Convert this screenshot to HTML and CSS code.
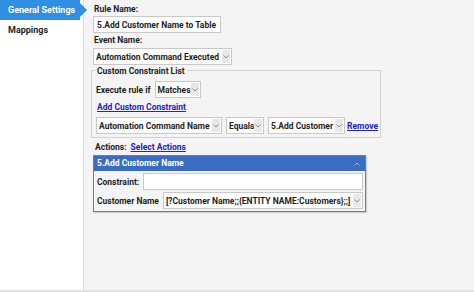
FILE: index.html
```html
<!DOCTYPE html>
<html lang="en">
<head>
<meta charset="UTF-8">
<title>Rule Editor</title>
<link rel="stylesheet" href="styles.css">
</head>
<body>
<div class="page">
  <div class="sidebar">
    <div class="tab active">General Settings</div>
    <div class="tab">Mappings</div>
  </div>

  <div class="main">
    <div class="label">Rule Name:</div>
    <div class="input rule-name">5.Add Customer Name to Table</div>

    <div class="label">Event Name:</div>
    <div class="select event-name"><span class="val">Automation Command Executed</span><span class="arrow"><svg width="6" height="4" viewBox="0 0 6 4"><path d="M0.5 0.5 L3 3 L5.5 0.5" fill="none" stroke="#8a8a8a" stroke-width="1"/></svg></span></div>

    <div class="fieldset">
      <div class="legend">Custom Constraint List</div>
      <div class="line">
        <span class="label-inline">Execute rule if</span>
        <div class="select w-match"><span class="val">Matches</span><span class="arrow"><svg width="6" height="4" viewBox="0 0 6 4"><path d="M0.5 0.5 L3 3 L5.5 0.5" fill="none" stroke="#8a8a8a" stroke-width="1"/></svg></span></div>
      </div>
      <a class="link add-link" href="#">Add Custom Constraint</a>
      <div class="line row-gap">
        <div class="select w-field"><span class="val">Automation Command Name</span><span class="arrow"><svg width="6" height="4" viewBox="0 0 6 4"><path d="M0.5 0.5 L3 3 L5.5 0.5" fill="none" stroke="#8a8a8a" stroke-width="1"/></svg></span></div>
        <div class="select w-op"><span class="val">Equals</span><span class="arrow"><svg width="6" height="4" viewBox="0 0 6 4"><path d="M0.5 0.5 L3 3 L5.5 0.5" fill="none" stroke="#8a8a8a" stroke-width="1"/></svg></span></div>
        <div class="select w-value"><span class="val">5.Add Customer</span><span class="arrow"><svg width="6" height="4" viewBox="0 0 6 4"><path d="M0.5 0.5 L3 3 L5.5 0.5" fill="none" stroke="#8a8a8a" stroke-width="1"/></svg></span></div>
        <a class="link remove" href="#">Remove</a>
      </div>
    </div>

    <div class="actions">
      <span>Actions:</span>
      <a class="link" href="#">Select Actions</a>
    </div>

    <div class="panel">
      <div class="panel-head">
        <span>5.Add Customer Name</span>
        <svg class="caret" width="6" height="4" viewBox="0 0 6 4"><path d="M0.5 3.5 L3 1 L5.5 3.5" fill="none" stroke="#9fb4dc" stroke-width="1"/></svg>
      </div>
      <div class="panel-body">
        <div class="line">
          <span class="label-inline">Constraint:</span>
          <div class="input grow"></div>
        </div>
        <div class="line row-gap-sm">
          <span class="label-inline">Customer Name</span>
          <div class="select grow"><span class="val">[?Customer Name;;{ENTITY NAME:Customers};;]</span><span class="arrow"><svg width="6" height="4" viewBox="0 0 6 4"><path d="M0.5 0.5 L3 3 L5.5 0.5" fill="none" stroke="#8a8a8a" stroke-width="1"/></svg></span></div>
        </div>
      </div>
    </div>
  </div>
</div>
</body>
</html>
```

FILE: styles.css
```css
body {
  margin: 0;
  font-family: Roboto, 'Noto Sans', sans-serif;
  font-size: 8.5px;
  font-weight: bold;
  color: #1e1e1e;
  background: #ffffff;
}

.page {
  display: flex;
  width: 474px;
  height: 290px;
  border-bottom: 2px solid #e2e2e2;
}

.sidebar {
  width: 83px;
  background: #ffffff;
  border-right: 1px solid #dcdcdc;
  flex-shrink: 0;
}

.tab {
  padding: 0 0 0 8px;
  height: 20px;
  line-height: 20px;
  font-size: 9px;
  white-space: nowrap;
}

.tab.active {
  background: #2f8fe3;
  color: #ffffff;
  position: relative;
  width: 72px;
}

.tab.active::after {
  content: '';
  position: absolute;
  right: -7px;
  top: 3px;
  border-top: 7px solid transparent;
  border-bottom: 7px solid transparent;
  border-left: 7px solid #2f8fe3;
}

.main {
  flex: 1;
  background: #f4f4f4;
  padding: 3px 0 0 9px;
}

.label {
  height: 13px;
  line-height: 13px;
  padding-left: 1px;
}

.input,
.select {
  display: inline-flex;
  align-items: center;
  height: 15px;
  background: #ffffff;
  border: 1px solid #c9c9c9;
  box-sizing: content-box;
  white-space: nowrap;
  overflow: hidden;
}

.input {
  padding: 0 3px;
}

.rule-name {
  width: 120px;
  margin: 0 0 1px 0;
}

.select .val {
  padding: 0 2px;
  flex: 1;
  overflow: hidden;
}

.select .arrow {
  display: flex;
  align-items: center;
  justify-content: center;
  width: 8px;
  height: 13px;
  margin-right: 1px;
  background: #e8e8e8;
  flex-shrink: 0;
}

.event-name {
  width: 137px;
  margin: 1px 0 5px 0;
}

.fieldset {
  width: 284px;
  margin-left: -2px;
  border: 1px solid #d2d2d2;
  padding: 10px 0 3px 4px;
  position: relative;
}

.legend {
  position: absolute;
  top: -6px;
  left: 3px;
  padding: 0 2px;
  background: #f4f4f4;
  line-height: 12px;
}

.line {
  display: flex;
  align-items: center;
  gap: 4px;
}

.row-gap {
  margin-top: 4px;
}

.row-gap-sm {
  margin-top: 2px;
}

.label-inline {
  white-space: nowrap;
}

.w-match { width: 44px; }
.w-field { width: 124px; }
.w-op { width: 36px; }
.w-value { width: 75px; }

.remove {
  margin-left: -2px;
}

.link {
  color: #2222cc;
  text-decoration: underline;
}

.add-link {
  display: block;
  margin: 3px 0 0 1px;
  line-height: 12px;
}

.actions {
  margin: 3px 0 1px 2px;
  display: flex;
  gap: 4px;
  line-height: 13px;
}

.panel {
  width: 271px;
  border: 1px solid #7a7a7a;
  background: #f4f4f4;
  box-shadow: 1px 1px 1px rgba(0,0,0,0.15);
}

.panel-head {
  background: #3a6cc2;
  color: #ffffff;
  height: 15px;
  line-height: 15px;
  padding: 0 5px 0 3px;
  display: flex;
  align-items: center;
  justify-content: space-between;
}

.panel-body {
  padding: 2px 2px 2px 3px;
}

.grow {
  flex: 1;
}
```
